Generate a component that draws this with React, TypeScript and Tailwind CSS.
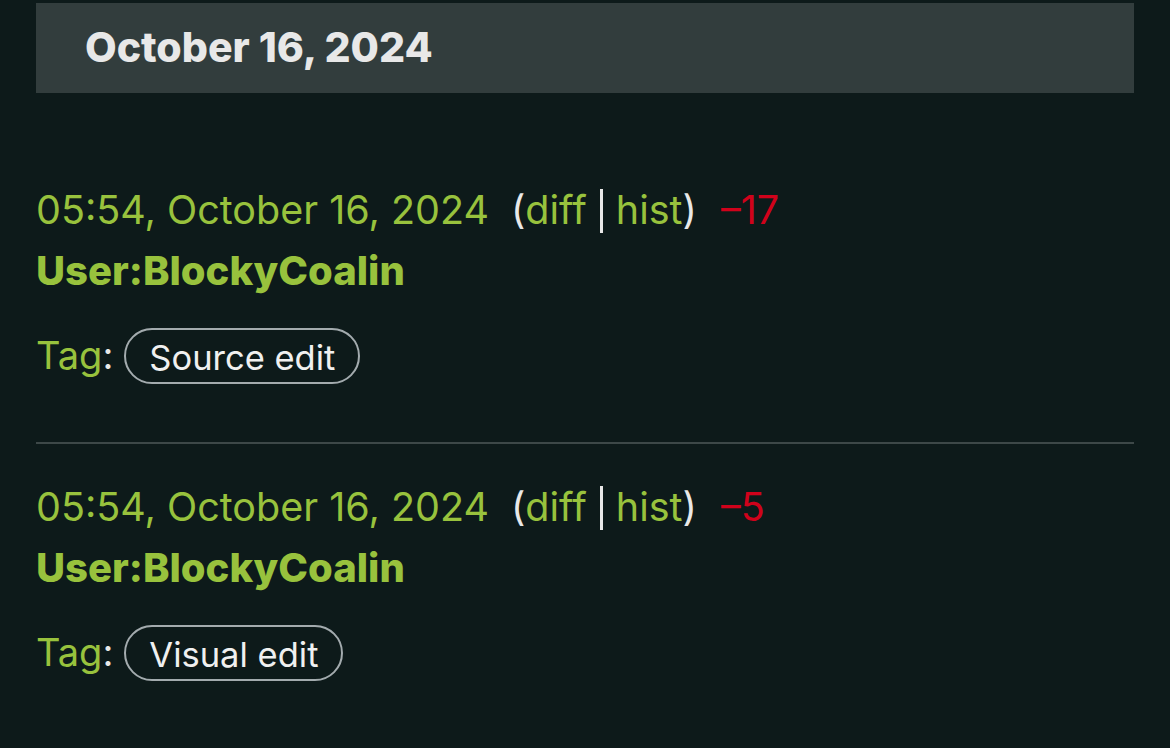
import React from "react";

type Change = {
    time: string;
    user: string;
    delta: number;
    tag: string;
};

const changes: Change[] = [
    { time: "05:54, October 16, 2024", user: "User:BlockyCoalin", delta: -17, tag: "Source edit" },
    { time: "05:54, October 16, 2024", user: "User:BlockyCoalin", delta: -5, tag: "Visual edit" },
];

function ChangeRow({ change, last }: { change: Change; last: boolean }) {
    return (
        <li className={last ? "pt-[34px]" : "pb-[58px] border-b-2 border-[#3d4848]"}>
            <div className="flex items-center h-[60px] text-[39.5px] whitespace-nowrap">
                <span className="text-[#98c23d]">{change.time}</span>
                <span className="ml-[22px] text-[#e8e8e8]">(</span>
                <span className="text-[#98c23d]">diff</span>
                <span className="mx-[13px] w-[3px] h-[44px] bg-[#e8e8e8]" />
                <span className="text-[#98c23d]">hist</span>
                <span className="text-[#e8e8e8]">)</span>
                <span className="ml-[24px] text-[#d0021b]">–{Math.abs(change.delta)}</span>
            </div>
            <div className="flex items-center h-[60px] text-[40px] font-extrabold text-[#98c23d]">
                {change.user}
            </div>
            <div className="flex items-center mt-[26px]">
                <span className="text-[38px] text-[#98c23d]">Tag</span>
                <span className="text-[38px] text-[#e8e8e8]">:</span>
                <span className="ml-[11px] h-[56px] px-[23px] pt-[4px] flex items-center rounded-full border-2 border-[#a3abae] text-[34.5px] text-[#f0f0f0]">
                    {change.tag}
                </span>
            </div>
        </li>
    );
}

export default function App() {
    return (
        <div
            className="w-[1170px] h-[748px] bg-[#0d1a1a] overflow-hidden pt-[3px] px-[36px]"
            style={{ fontFamily: "Inter, 'Noto Sans', sans-serif" }}
        >
            <div className="h-[90px] bg-[#323d3d] flex items-center pl-[49px]">
                <h2 className="text-[41px] font-extrabold text-[#e8e8e8]">October 16, 2024</h2>
            </div>
            <ul className="pt-[88px]">
                {changes.map((c, i) => (
                    <ChangeRow key={i} change={c} last={i === changes.length - 1} />
                ))}
            </ul>
        </div>
    );
}
